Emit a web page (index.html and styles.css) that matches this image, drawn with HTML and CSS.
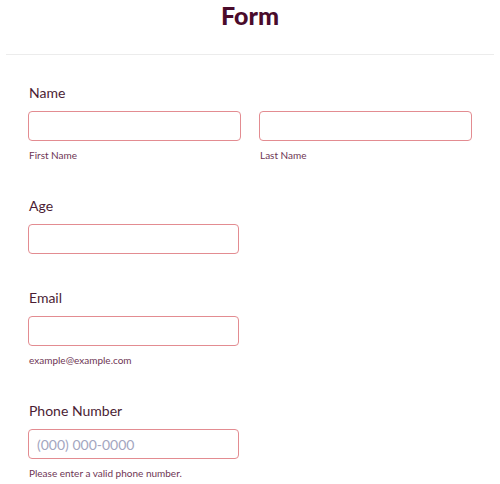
FILE: index.html
```html
<!DOCTYPE html>
<html lang="en">
<head>
<meta charset="utf-8">
<title>Form</title>
<link rel="stylesheet" href="styles.css">
</head>
<body>
<header class="form-header">
  <h1 class="form-title">Form</h1>
</header>
<form class="form-list">
  <div class="field">
    <label class="field-label">Name</label>
    <div class="name-row">
      <div class="sub">
        <input class="text-input" type="text">
        <span class="sublabel">First Name</span>
      </div>
      <div class="sub">
        <input class="text-input" type="text">
        <span class="sublabel">Last Name</span>
      </div>
    </div>
  </div>
  <div class="field">
    <label class="field-label">Age</label>
    <input class="text-input single" type="text">
  </div>
  <div class="field">
    <label class="field-label">Email</label>
    <input class="text-input single" type="text">
    <span class="sublabel">example@example.com</span>
  </div>
  <div class="field">
    <label class="field-label">Phone Number</label>
    <input class="text-input single" type="text" placeholder="(000) 000-0000">
    <span class="sublabel">Please enter a valid phone number.</span>
  </div>
</form>
</body>
</html>
```
FILE: styles.css
```css
html, body {
  margin: 0;
  padding: 0;
  background: #ffffff;
  font-family: Lato, "Noto Sans", sans-serif;
  color: #4b1d34;
}

.form-header {
  margin: 0 6px;
  padding-bottom: 24px;
  border-bottom: 1px solid #ececec;
  text-align: center;
}

.form-title {
  margin: 0;
  font-size: 25px;
  line-height: 30px;
  font-weight: 900;
  color: #4a0b2b;
}

.form-list {
  display: flex;
  flex-direction: column;
  padding-top: 16px;
}

.field {
  display: flex;
  flex-direction: column;
  padding: 12px 28px 22px;
}

.field-label {
  font-size: 14px;
  line-height: 20px;
  margin-bottom: 8px;
  padding-left: 1px;
  color: #4b1d34;
}

.name-row {
  display: grid;
  grid-template-columns: 213px 213px;
  column-gap: 18px;
}

.sub {
  display: flex;
  flex-direction: column;
}

.text-input {
  box-sizing: border-box;
  height: 30px;
  width: 100%;
  margin: 0;
  border: 1px solid #e38c91;
  border-radius: 4px;
  padding: 0 8px;
  font-family: Lato, "Noto Sans", sans-serif;
  font-size: 14px;
  color: #4b1d34;
  background: #ffffff;
  outline: none;
}

.text-input.single {
  width: 211px;
}

.text-input::placeholder {
  color: #a3a6bf;
}

.sublabel {
  margin-top: 7px;
  padding-left: 1px;
  font-size: 10px;
  line-height: 14px;
  color: #6e3554;
}
```
